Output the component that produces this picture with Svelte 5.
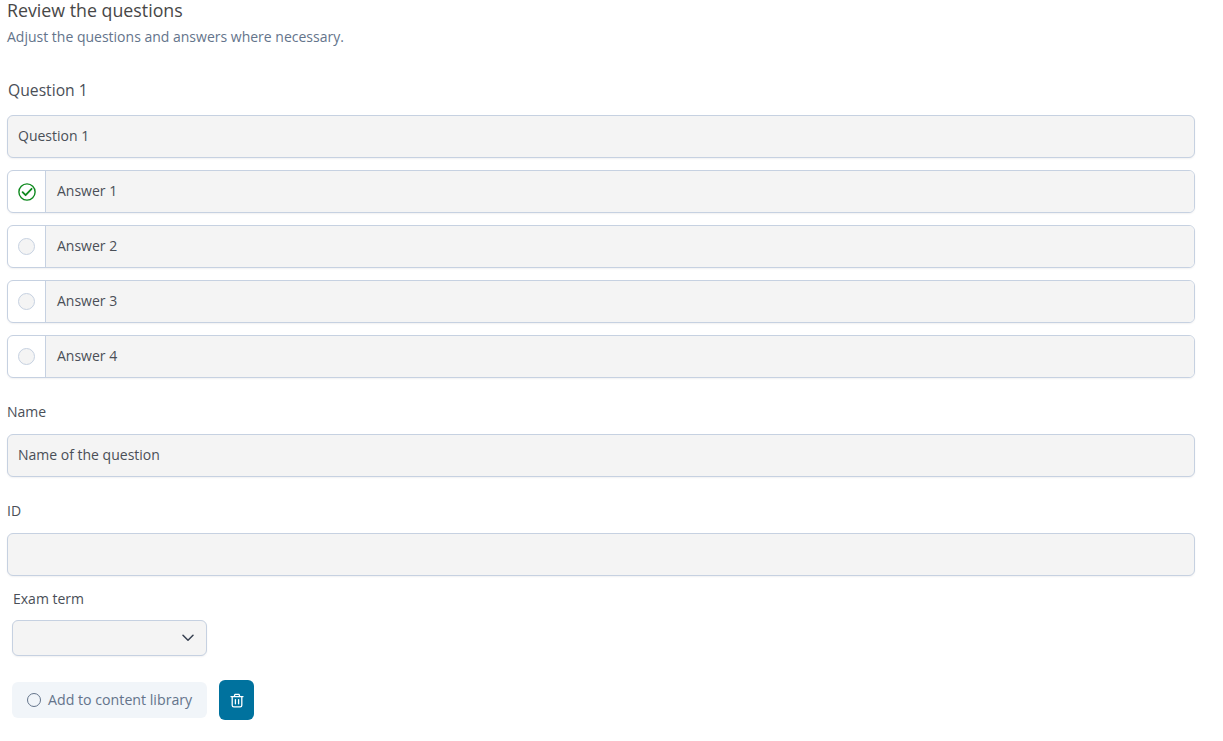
<script lang="ts">
  const answers = [
    { label: 'Answer 1', correct: true },
    { label: 'Answer 2', correct: false },
    { label: 'Answer 3', correct: false },
    { label: 'Answer 4', correct: false }
  ];
</script>

<main class="page">
  <header class="head">
    <h1>Review the questions</h1>
    <p>Adjust the questions and answers where necessary.</p>
  </header>

  <h2>Question 1</h2>
  <div class="field question">Question 1</div>

  <div class="answers">
    {#each answers as answer}
      <div class="answer">
        <span class="answer__mark">
          {#if answer.correct}
            <svg width="18" height="18" viewBox="0 0 18 18" fill="none" aria-hidden="true">
              <circle cx="9" cy="9" r="8.1" stroke="#0f8a1f" stroke-width="1.4" />
              <path d="M4.6 9.2l3 3 6-6.4" stroke="#0f8a1f" stroke-width="1.8" stroke-linecap="round" stroke-linejoin="round" />
            </svg>
          {:else}
            <span class="answer__dot"></span>
          {/if}
        </span>
        <span class="answer__text">{answer.label}</span>
      </div>
    {/each}
  </div>

  <div class="label name-label">Name</div>
  <div class="field">Name of the question</div>

  <div class="label id-label">ID</div>
  <div class="field"></div>

  <div class="exam">
    <div class="label">Exam term</div>
    <div class="select">
      <svg width="12" height="8" viewBox="0 0 12 8" fill="none" aria-hidden="true">
        <path d="M1 1.2l5 5 5-5" stroke="#374151" stroke-width="1.5" stroke-linecap="round" stroke-linejoin="round" />
      </svg>
    </div>

    <div class="actions">
      <button class="library" type="button">
        <span class="library__ring"></span>
        <span class="library__text">Add to content library</span>
      </button>
      <button class="trash" type="button" aria-label="Delete">
        <svg width="14" height="15" viewBox="0 0 14 15" fill="none" stroke="#fff" stroke-width="1.3" stroke-linecap="round" stroke-linejoin="round" aria-hidden="true">
          <path d="M1 3.6h12" />
          <path d="M4.3 3.4l.6-2h4.2l.6 2" />
          <path d="M2.2 3.6v8.6c0 1 .6 1.6 1.6 1.6h6.4c1 0 1.6-.6 1.6-1.6V3.6" />
          <path d="M5.4 6.6v4.2M8.6 6.6v4.2" />
        </svg>
      </button>
    </div>
  </div>
</main>

<style>
  :global(body) {
    margin: 0;
    background: #fff;
  }

  .page {
    box-sizing: border-box;
    width: 1223px;
    height: 741px;
    overflow: hidden;
    padding: 0 28px 0 7px;
    font-family: "Open Sans", "Liberation Sans", sans-serif;
    color: #4a4f57;
  }

  .head h1 {
    margin: 0;
    font-size: 17.8px;
    font-weight: 400;
    line-height: 20px;
    color: #474747;
  }

  .head p {
    margin: 7px 0 0;
    font-size: 14px;
    line-height: 20px;
    color: #64748b;
  }

  h2 {
    margin: 32px 0 0 1px;
    font-size: 15.7px;
    font-weight: 400;
    line-height: 22px;
    color: #4a4f57;
  }

  .field {
    box-sizing: border-box;
    height: 43px;
    padding: 0 10px 2px;
    display: flex;
    align-items: center;
    font-size: 14px;
    color: #4a4f57;
    background: #f4f4f4;
    border: 1px solid #c6d1e1;
    border-radius: 6px;
    box-shadow: 0 1px 2px rgba(15, 23, 42, 0.06);
  }

  .question {
    margin-top: 14px;
  }

  .answers {
    display: flex;
    flex-direction: column;
    gap: 12px;
    margin-top: 12px;
  }

  .answer {
    box-sizing: border-box;
    height: 43px;
    display: flex;
    overflow: hidden;
    background: #fff;
    border: 1px solid #c6d1e1;
    border-radius: 6px;
    box-shadow: 0 1px 2px rgba(15, 23, 42, 0.06);
  }

  .answer__mark {
    flex: 0 0 37px;
    display: flex;
    align-items: center;
    justify-content: center;
    border-right: 1px solid #c6d1e1;
  }

  .answer__dot {
    box-sizing: border-box;
    width: 17px;
    height: 17px;
    border: 1px solid #c6d1e1;
    border-radius: 50%;
    background: #f4f4f4;
  }

  .answer__text {
    flex: 1;
    display: flex;
    align-items: center;
    padding: 0 0 2px 11px;
    font-size: 14px;
    color: #4a4f57;
    background: #f4f4f4;
  }

  .label {
    font-size: 14px;
    line-height: 20px;
    color: #4a4f57;
  }

  .name-label {
    margin: 24px 0 12px;
  }

  .id-label {
    margin: 24px 0 12px;
  }

  .exam {
    margin: 13px 0 0 5px;
  }

  .exam .label {
    margin-left: 1px;
  }

  .select {
    box-sizing: border-box;
    width: 195px;
    height: 36px;
    margin-top: 11px;
    padding-right: 12px;
    display: flex;
    align-items: center;
    justify-content: flex-end;
    background: #f4f4f4;
    border: 1px solid #c6d1e1;
    border-radius: 6px;
    box-shadow: 0 1px 2px rgba(15, 23, 42, 0.06);
  }

  .actions {
    display: flex;
    align-items: center;
    gap: 12px;
    margin-top: 24px;
  }

  button {
    border: 0;
    font-family: inherit;
  }

  .library {
    box-sizing: border-box;
    width: 195px;
    height: 36px;
    padding: 0 0 0 15px;
    display: flex;
    align-items: center;
    gap: 7px;
    font-size: 14.2px;
    color: #64748b;
    background: #f1f5f9;
    border-radius: 6px;
  }

  .library__text {
    position: relative;
    top: -1px;
  }

  .library__ring {
    box-sizing: border-box;
    width: 14px;
    height: 14px;
    border: 1.5px solid #64748b;
    border-radius: 50%;
  }

  .trash {
    width: 35px;
    height: 40px;
    padding: 0;
    display: flex;
    align-items: center;
    justify-content: center;
    background: #00729e;
    border-radius: 6px;
  }
</style>
